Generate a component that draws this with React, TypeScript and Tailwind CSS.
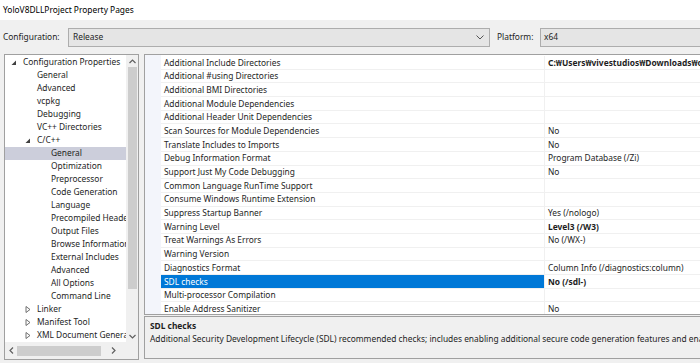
import React from "react";

const treeItems: { label: string; level: number; tri?: "open" | "closed"; selected?: boolean }[] = [
  { label: "Configuration Properties", level: 0, tri: "open" },
  { label: "General", level: 1 },
  { label: "Advanced", level: 1 },
  { label: "vcpkg", level: 1 },
  { label: "Debugging", level: 1 },
  { label: "VC++ Directories", level: 1 },
  { label: "C/C++", level: 1, tri: "open" },
  { label: "General", level: 2, selected: true },
  { label: "Optimization", level: 2 },
  { label: "Preprocessor", level: 2 },
  { label: "Code Generation", level: 2 },
  { label: "Language", level: 2 },
  { label: "Precompiled Headers", level: 2 },
  { label: "Output Files", level: 2 },
  { label: "Browse Information", level: 2 },
  { label: "External Includes", level: 2 },
  { label: "Advanced", level: 2 },
  { label: "All Options", level: 2 },
  { label: "Command Line", level: 2 },
  { label: "Linker", level: 1, tri: "closed" },
  { label: "Manifest Tool", level: 1, tri: "closed" },
  { label: "XML Document Generator", level: 1, tri: "closed" },
];

const props: { name: string; value: string; bold?: boolean; selected?: boolean }[] = [
  { name: "Additional Include Directories", value: "C:₩Users₩vivestudios₩Downloads₩onnxruntime₩include", bold: true },
  { name: "Additional #using Directories", value: "" },
  { name: "Additional BMI Directories", value: "" },
  { name: "Additional Module Dependencies", value: "" },
  { name: "Additional Header Unit Dependencies", value: "" },
  { name: "Scan Sources for Module Dependencies", value: "No" },
  { name: "Translate Includes to Imports", value: "No" },
  { name: "Debug Information Format", value: "Program Database (/Zi)" },
  { name: "Support Just My Code Debugging", value: "No" },
  { name: "Common Language RunTime Support", value: "" },
  { name: "Consume Windows Runtime Extension", value: "" },
  { name: "Suppress Startup Banner", value: "Yes (/nologo)" },
  { name: "Warning Level", value: "Level3 (/W3)", bold: true },
  { name: "Treat Warnings As Errors", value: "No (/WX-)" },
  { name: "Warning Version", value: "" },
  { name: "Diagnostics Format", value: "Column Info (/diagnostics:column)" },
  { name: "SDL checks", value: "No (/sdl-)", bold: true, selected: true },
  { name: "Multi-processor Compilation", value: "" },
  { name: "Enable Address Sanitizer", value: "No" },
];

function Tri({ kind }: { kind: "open" | "closed" }) {
  if (kind === "open") {
    return (
      <svg width="6" height="6" viewBox="0 0 6 6" className="shrink-0">
        <polygon points="5,0.5 5,5 0.5,5" fill="#404040" />
      </svg>
    );
  }
  return (
    <svg width="6" height="7" viewBox="0 0 6 7" className="shrink-0">
      <polygon points="1,0.5 5,3.5 1,6.5" fill="none" stroke="#606060" strokeWidth="0.9" />
    </svg>
  );
}

export default function App() {
  const font = { fontFamily: '"Noto Sans", "Segoe UI", sans-serif' };
  return (
    <div
      className="w-[700px] h-[363px] overflow-hidden bg-[#f0f0f0] text-[8.4px] text-[#1e1e1e] flex flex-col"
      style={font}
    >
      {/* title */}
      <div className="h-[20px] bg-white flex items-center pl-[3px] text-[8.4px] text-black shrink-0">
        YoloV8DLLProject Property Pages
      </div>
      {/* config bar */}
      <div className="h-[34px] flex items-center shrink-0 pt-[1px]">
        <div className="w-[68px] pl-[3px]">Configuration:</div>
        <div className="w-[422px] h-[19px] bg-[#e5e5e5] border border-[#adadad] flex items-center pl-[4px] pr-[5px]">
          <span className="flex-1">Release</span>
          <svg width="8" height="5" viewBox="0 0 8 5">
            <polyline points="0.5,0.5 4,4 7.5,0.5" fill="none" stroke="#555" strokeWidth="1" />
          </svg>
        </div>
        <div className="w-[50px] pl-[7px]">Platform:</div>
        <div className="flex-1 h-[19px] bg-[#e5e5e5] border border-[#adadad] border-r-0 flex items-center pl-[3px]">
          x64
        </div>
      </div>
      {/* body */}
      <div className="flex flex-1 min-h-0">
        {/* tree */}
        <div className="ml-[4px] w-[135px] h-[306px] border border-[#a0a0a0] bg-white flex flex-col shrink-0">
          <div className="flex flex-1 min-h-0">
            <div className="flex-1 min-w-0 overflow-hidden pt-[1px]">
              {treeItems.map((it, i) => (
                <div
                  key={i}
                  className={`h-[13px] flex items-center whitespace-nowrap ${it.selected ? "bg-[#cccedb]" : ""}`}
                  style={{ paddingLeft: 6 + it.level * 14 }}
                >
                  <span className="w-[11px] shrink-0 flex items-center">{it.tri ? <Tri kind={it.tri} /> : null}</span>
                  <span className="pl-[1px] shrink-0">{it.label}</span>
                </div>
              ))}
            </div>
            {/* vertical scrollbar */}
            <div className="w-[12px] bg-[#f0f0f0] flex flex-col items-center shrink-0">
              <div className="h-[12px] flex items-center justify-center">
                <svg width="7" height="5" viewBox="0 0 7 5">
                  <polyline points="0.5,4 3.5,1 6.5,4" fill="none" stroke="#606060" strokeWidth="1.2" />
                </svg>
              </div>
              <div className="w-[9px] h-[222px] bg-[#cdcdcd]"></div>
              <div className="flex-1"></div>
              <div className="h-[12px] flex items-center justify-center">
                <svg width="7" height="5" viewBox="0 0 7 5">
                  <polyline points="0.5,1 3.5,4 6.5,1" fill="none" stroke="#606060" strokeWidth="1.2" />
                </svg>
              </div>
            </div>
          </div>
          {/* horizontal scrollbar */}
          <div className="h-[17px] flex shrink-0">
            <div className="flex-1 bg-[#f0f0f0] flex items-center">
              <div className="w-[12px] flex justify-center">
                <svg width="5" height="7" viewBox="0 0 5 7">
                  <polyline points="4,0.5 1,3.5 4,6.5" fill="none" stroke="#606060" strokeWidth="1.2" />
                </svg>
              </div>
              <div className="w-[84px] h-[10px] bg-[#cdcdcd]"></div>
              <div className="flex-1 flex justify-center">
                <svg width="5" height="7" viewBox="0 0 5 7">
                  <polyline points="1,0.5 4,3.5 1,6.5" fill="none" stroke="#606060" strokeWidth="1.2" />
                </svg>
              </div>
            </div>
            <div className="w-[12px] bg-[#f0f0f0]"></div>
          </div>
        </div>
        {/* right side */}
        <div className="ml-[5px] flex-1 flex flex-col min-w-0">
          <div className="h-[261px] border border-[#a0a0a0] border-r-0 bg-white flex overflow-hidden">
            <div className="w-[16px] bg-[#f3f5fb] shrink-0"></div>
            <div className="flex-1 flex flex-col min-w-0 pt-[1px]">
              {props.map((p, i) => (
                <div key={i} className="h-[13.7px] flex shrink-0 border-b border-[#f0f0f0]">
                  <div
                    className={`w-[383px] shrink-0 pl-[3px] pt-[1px] flex items-center whitespace-nowrap ${
                      p.selected ? "bg-[#0078d7] text-white" : ""
                    }`}
                  >
                    {p.name}
                  </div>
                  <div
                    className={`flex-1 min-w-0 border-l border-[#f0f0f0] pl-[3px] pt-[1px] flex items-center whitespace-nowrap overflow-hidden ${
                      p.bold ? "font-bold" : ""
                    }`}
                  >
                    {p.value}
                  </div>
                </div>
              ))}
            </div>
          </div>
          <div className="mt-[1px] h-[43px] border border-[#a0a0a0] border-r-0 bg-[#f0f0f0] px-[5px] pt-[2px] whitespace-nowrap overflow-hidden">
            <div className="font-bold leading-[13px]">SDL checks</div>
            <div className="leading-[13px]">
              Additional Security Development Lifecycle (SDL) recommended checks; includes enabling additional secure code generation features and enables extra security-relevant warnings as errors.
            </div>
          </div>
        </div>
      </div>
    </div>
  );
}
